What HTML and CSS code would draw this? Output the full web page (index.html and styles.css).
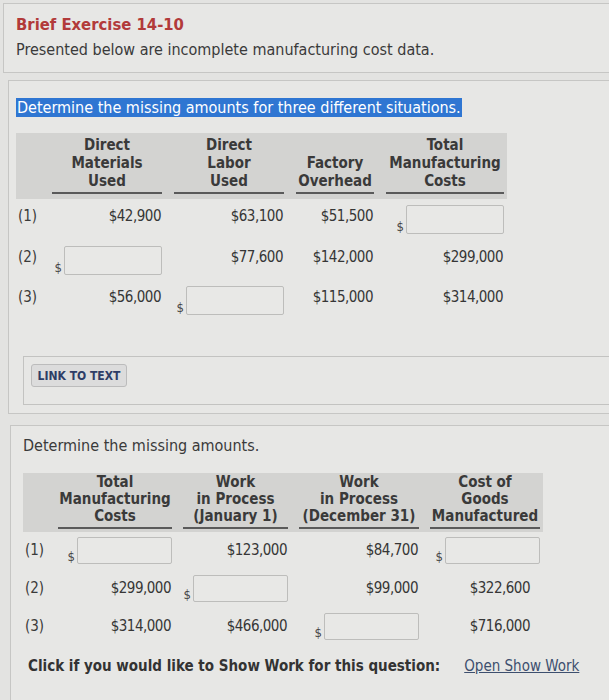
FILE: index.html
```html
<!DOCTYPE html>
<html>
<head>
<meta charset="utf-8">
<link rel="stylesheet" href="styles.css">
</head>
<body>
<div class="page">
  <section class="panel head-panel">
    <h1 class="title">Brief Exercise 14-10</h1>
    <p class="intro">Presented below are incomplete manufacturing cost data.</p>
  </section>

  <section class="panel q-panel">
    <p class="instr"><span class="sel">Determine the missing amounts for three different situations.</span></p>
    <div class="grid t1">
      <div class="lbl"></div>
      <div class="hcell"><span>Direct<br>Materials<br>Used</span></div>
      <div class="hcell"><span>Direct<br>Labor<br>Used</span></div>
      <div class="hcell"><span>Factory<br>Overhead</span></div>
      <div class="hcell"><span>Total<br>Manufacturing<br>Costs</span></div>

      <div class="lbl">(1)</div>
      <div class="val">$42,900</div>
      <div class="val">$63,100</div>
      <div class="val">$51,500</div>
      <div class="val inp"><span class="dl">$</span><span class="box"></span></div>

      <div class="lbl">(2)</div>
      <div class="val inp"><span class="dl">$</span><span class="box"></span></div>
      <div class="val">$77,600</div>
      <div class="val">$142,000</div>
      <div class="val">$299,000</div>

      <div class="lbl">(3)</div>
      <div class="val">$56,000</div>
      <div class="val inp"><span class="dl">$</span><span class="box"></span></div>
      <div class="val">$115,000</div>
      <div class="val">$314,000</div>
    </div>

    <div class="link-panel">
      <button class="link-btn">LINK TO TEXT</button>
    </div>
  </section>

  <section class="panel q-panel2">
    <p class="instr2">Determine the missing amounts.</p>
    <div class="grid t2">
      <div class="lbl"></div>
      <div class="hcell"><span>Total<br>Manufacturing<br>Costs</span></div>
      <div class="hcell"><span>Work<br>in Process<br>(January 1)</span></div>
      <div class="hcell"><span>Work<br>in Process<br>(December 31)</span></div>
      <div class="hcell"><span>Cost of<br>Goods<br>Manufactured</span></div>

      <div class="lbl">(1)</div>
      <div class="val inp"><span class="dl">$</span><span class="box"></span></div>
      <div class="val">$123,000</div>
      <div class="val">$84,700</div>
      <div class="val inp"><span class="dl">$</span><span class="box"></span></div>

      <div class="lbl">(2)</div>
      <div class="val">$299,000</div>
      <div class="val inp"><span class="dl">$</span><span class="box"></span></div>
      <div class="val">$99,000</div>
      <div class="val last">$322,600</div>

      <div class="lbl">(3)</div>
      <div class="val">$314,000</div>
      <div class="val">$466,000</div>
      <div class="val inp"><span class="dl">$</span><span class="box"></span></div>
      <div class="val last">$716,000</div>
    </div>

    <p class="showwork"><b>Click if you would like to Show Work for this question:</b><a class="sw-link" href="#">Open Show Work</a></p>
  </section>
</div>
</body>
</html>
```

FILE: styles.css
```css
* { box-sizing: border-box; }
html, body {
  margin: 0;
  padding: 0;
  background: #e3e3e1;
}
body {
  font-family: "DejaVu Sans Condensed", "DejaVu Sans", Verdana, sans-serif;
  font-stretch: condensed;
  color: #3a3a3a;
  width: 609px;
  height: 700px;
  overflow: hidden;
}
.page {
  padding-top: 3px;
}
.panel {
  border: 1px solid #c6c6c4;
  border-right: none;
  background: #e7e7e5;
}
.head-panel {
  margin-left: 3px;
  height: 70px;
  padding: 11px 0 0 12px;
}
.title {
  margin: 0;
  font-size: 16.5px;
  font-weight: bold;
  color: #b23a3a;
  line-height: 20px;
}
.intro {
  margin: 5px 0 0;
  font-size: 16px;
  line-height: 20px;
  color: #3a3a3a;
}
.q-panel {
  margin: 7px 0 0 8px;
  height: 334px;
  padding: 17px 0 0 7px;
}
.instr {
  margin: 0;
  font-size: 16px;
  line-height: 20px;
}
.sel {
  background: #2f76d2;
  color: #fff;
  padding: 0 1px;
}
.grid {
  display: grid;
  position: relative;
}
.t1 {
  margin-top: 15px;
  width: 491px;
  grid-template-columns: 24px 110px 110px 78px 118px;
  grid-template-rows: 66px 41px 40px 40px;
  column-gap: 12px;
  padding-right: 3px;
}
.t1::before, .t2::before {
  content: "";
  position: absolute;
  left: 0;
  right: 0;
  top: 0;
  background: #d3d3d1;
  z-index: 0;
}
.t1::before { height: 66px; }
.t2::before { height: 59px; }
.hcell {
  position: relative;
  z-index: 1;
  display: flex;
  align-items: flex-end;
  justify-content: center;
  border-bottom: 2px solid #5a5a5a;
  margin-bottom: 5px;
  text-align: center;
  font-weight: bold;
  font-size: 15px;
  line-height: 18px;
  color: #3a3a3a;
  padding-bottom: 2px;
}
.lbl {
  position: relative;
  z-index: 1;
  font-size: 15px;
  line-height: 18px;
  padding-left: 2px;
  padding-top: 8px;
}
.val {
  font-size: 15px;
  letter-spacing: -0.5px;
  line-height: 18px;
  text-align: right;
  padding-top: 8px;
  padding-right: 1px;
  color: #363636;
}
.val.inp {
  display: flex;
  justify-content: flex-end;
  align-items: flex-end;
  align-self: start;
  padding-top: 0;
  padding-right: 0;
  margin-top: 6px;
  letter-spacing: 0;
}
.dl {
  font-size: 13px;
  line-height: 13px;
  margin-right: 2px;
  margin-bottom: 1px;
  color: #444;
}
.box {
  display: block;
  width: 98px;
  height: 29px;
  border: 1px solid #bdbdbb;
  border-radius: 2px;
  background: #e8e8e6;
}
.link-panel {
  margin: 36px 0 0 7px;
  height: 49px;
  border: 1px solid #c3c3c1;
  border-right: none;
  padding: 7px 0 0 7px;
}
.link-btn {
  font-family: "DejaVu Sans Condensed", "DejaVu Sans", sans-serif;
  font-stretch: condensed;
  font-size: 12px;
  font-weight: bold;
  color: #2e3d66;
  background: #dcdcdc;
  border: 1px solid #bcbcbc;
  border-radius: 3px;
  height: 23px;
  width: 96px;
  padding: 0;
}
.q-panel2 {
  margin: 11px 0 0 10px;
  height: 290px;
  padding: 10px 0 0 12px;
}
.instr2 {
  margin: 0;
  font-size: 16px;
  line-height: 20px;
}
.t2 {
  margin-top: 17px;
  width: 520px;
  grid-template-columns: 24px 114px 105px 120px 110px;
  grid-template-rows: 59px 38px 38px 36px;
  column-gap: 11px;
  padding-right: 3px;
}
.t2 .hcell {
  line-height: 17px;
  margin-bottom: 3px;
}
.t2 .lbl, .t2 .val { padding-top: 9px; }
.t2 .val.inp { padding-top: 0; margin-top: 5px; }
.t2 .val.last { padding-right: 10px; }
.t2 .box { height: 27px; width: 95px; }
.showwork {
  margin: 13px 0 0 5px;
  font-size: 15px;
  color: #333;
}
.sw-link {
  margin-left: 24px;
  color: #3d4f6e;
  text-decoration: underline;
}
```
